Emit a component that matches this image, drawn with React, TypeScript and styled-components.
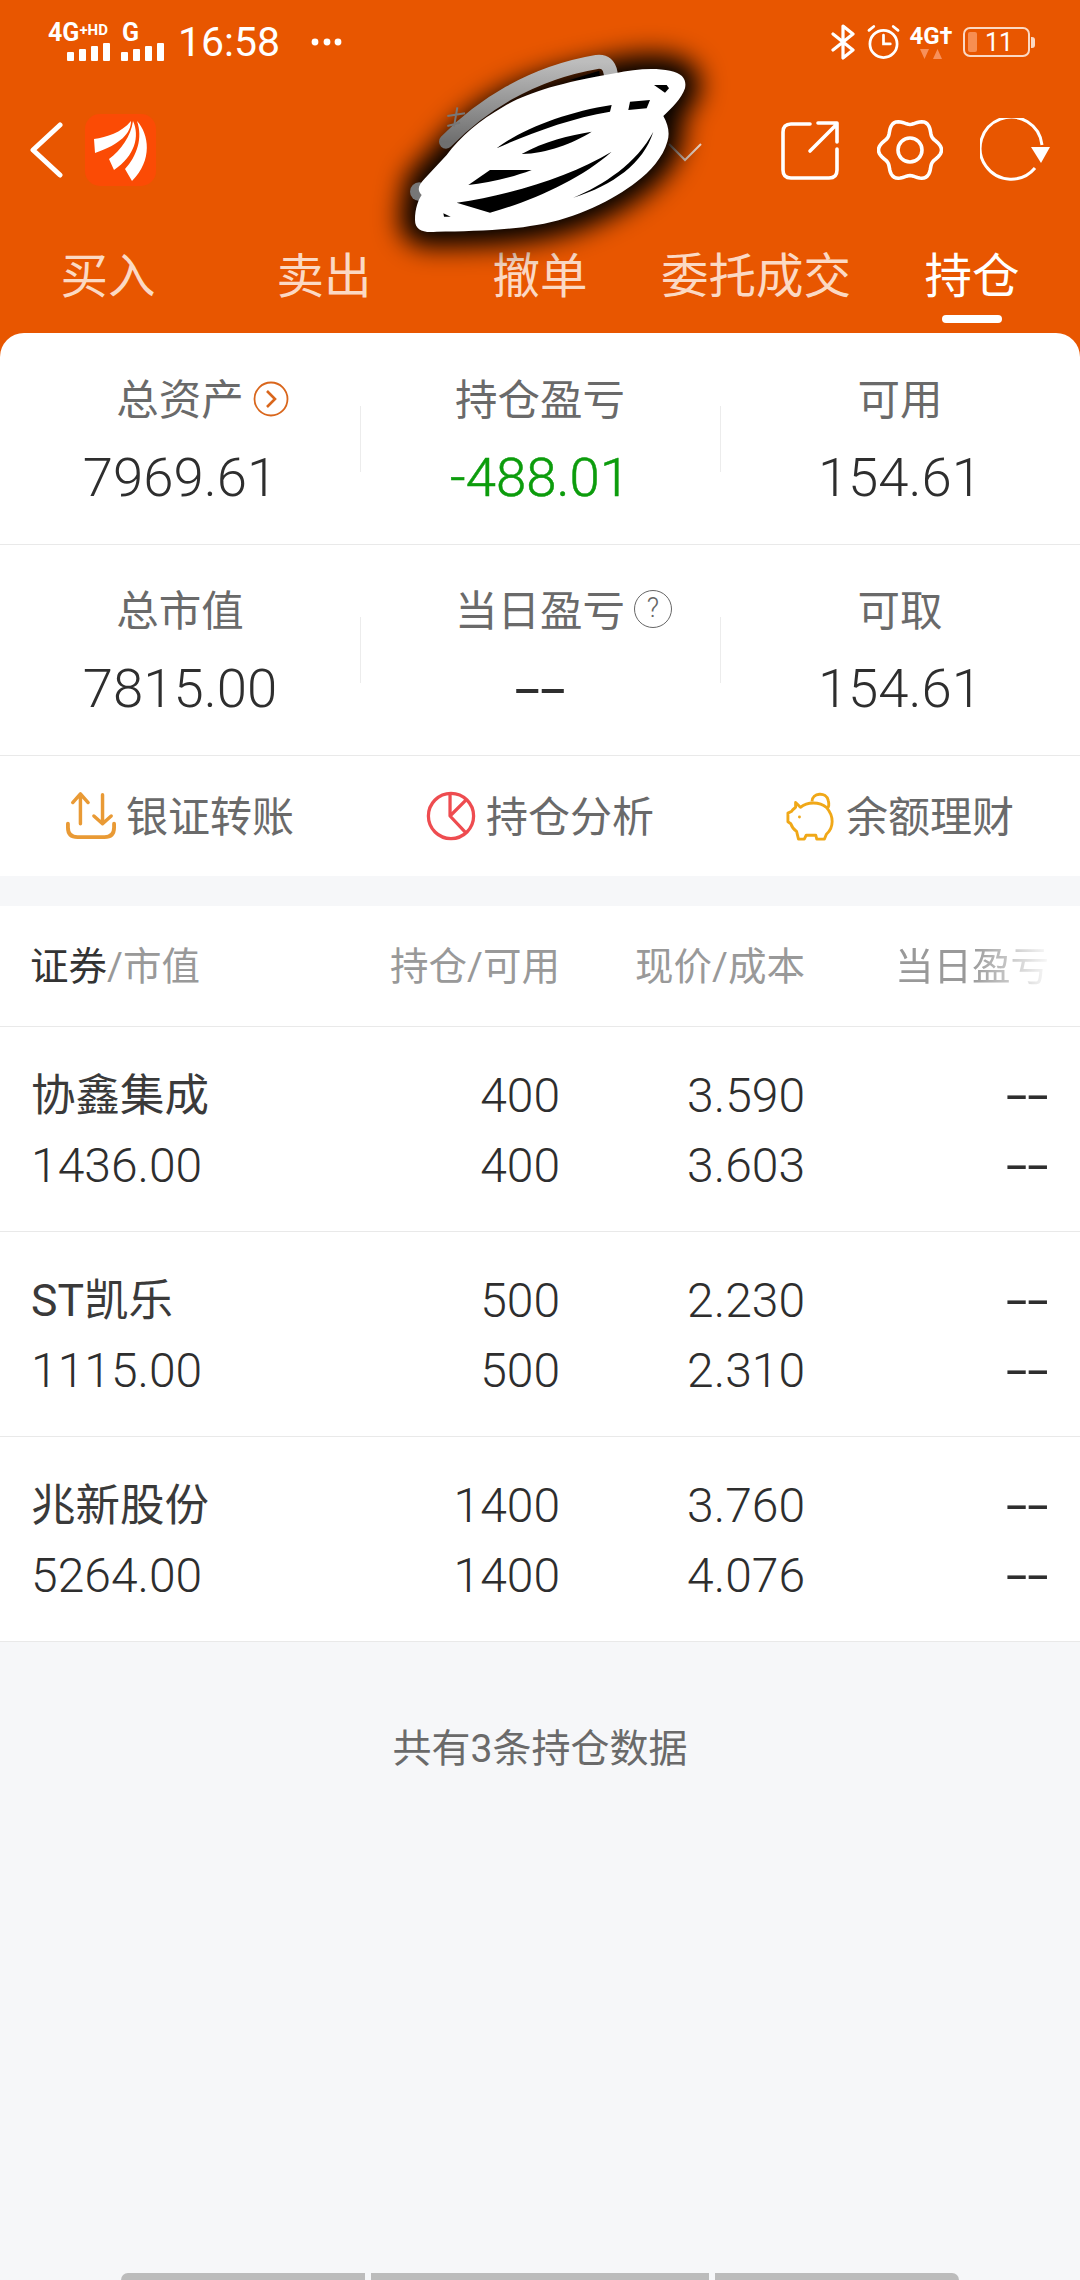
import React from "react"
import styled, { createGlobalStyle } from "styled-components"

const SANS = `Roboto, "Noto Sans CJK SC", sans-serif`

const GlobalStyle = createGlobalStyle`
	html, body {
		margin: 0;
		padding: 0;
		background: #f6f7f9;
		font-family: ${SANS};
	}
`

type Stat = { label: string; value: string; tone?: "down"; badge?: "go" | "help" }

const STATS: Stat[][] = [
	[
		{ label: "总资产", value: "7969.61", badge: "go" },
		{ label: "持仓盈亏", value: "-488.01", tone: "down" },
		{ label: "可用", value: "154.61" },
	],
	[
		{ label: "总市值", value: "7815.00" },
		{ label: "当日盈亏", value: "--", badge: "help" },
		{ label: "可取", value: "154.61" },
	],
]

const HOLDINGS = [
	{ name: "协鑫集成", worth: "1436.00", hold: "400", free: "400", price: "3.590", cost: "3.603" },
	{ name: "ST凯乐", worth: "1115.00", hold: "500", free: "500", price: "2.230", cost: "2.310" },
	{ name: "兆新股份", worth: "5264.00", hold: "1400", free: "1400", price: "3.760", cost: "4.076" },
]

const TABS = ["买入", "卖出", "撤单", "委托成交", "持仓"]

// cog outline: six soft lobes, dips at top and bottom
function gearPath() {
	const pts: string[] = []
	for (let i = 0; i < 96; i++) {
		const t = (i / 96) * Math.PI * 2
		const r = 28.5 + 3 * Math.cos(6 * t)
		pts.push(`${(33 + r * Math.cos(t)).toFixed(2)} ${(33 + r * Math.sin(t)).toFixed(2)}`)
	}
	return `M${pts.join(" L")} Z`
}

const BLOB = "M135 570 C135 535 145 510 155 495 C140 480 145 465 165 445 L230 375 C270 320 330 270 400 230 C470 190 560 160 735 130 C790 118 850 112 900 122 C940 130 950 150 945 175 C935 205 905 235 880 258 C895 285 900 310 892 335 C880 380 840 425 800 455 C730 510 620 565 500 585 C420 600 300 605 200 605 C160 610 135 600 135 570 Z"

function Scribble() {
	return (
		<ScribbleBox>
			<svg width="360" height="240" viewBox="0 0 1080 720">
				<defs>
					<filter id="soft" x="-30%" y="-40%" width="160%" height="180%">
						<feGaussianBlur stdDeviation="40" />
					</filter>
					<linearGradient id="band" x1="0" y1="0" x2="0" y2="1">
						<stop offset="0" stopColor="#bdbdbd" />
						<stop offset="1" stopColor="#6f6f6f" />
					</linearGradient>
				</defs>
				<path d={BLOB} fill="#000" stroke="#000" strokeWidth="90" filter="url(#soft)" />
				<path d="M228 335 C330 230 480 130 680 96 C705 93 718 105 722 130" fill="none" stroke="url(#band)" strokeWidth="42" strokeLinecap="round" />
				<path d="M600 150 L688 122 L690 150 Z" fill="#000" />
				<circle cx="148" cy="485" r="28" fill="#777" />
				<path d="M232 258 L285 250 M262 232 L252 290 M232 288 L270 278" fill="none" stroke="#777" strokeWidth="6" />
				<path d={BLOB} fill="#fff" />
				<path d="M380 355 C450 300 590 245 725 225 L720 245 C600 265 480 310 380 355 Z" fill="#000" />
				<path d="M455 372 C520 335 600 315 665 305 C610 340 530 370 455 372 Z" fill="#000" />
				<path d="M295 465 L360 420 L485 420 C420 445 350 458 295 465 Z" fill="#000" />
				<path d="M260 518 C420 495 600 440 725 365 C630 450 480 515 360 548 Z" fill="#000" />
				<path d="M610 503 C700 465 800 400 850 305 C820 400 730 465 610 503 Z" fill="#000" />
				<path d="M780 215 L840 210 L830 235 L775 240 Z" fill="#000" />
				<path d="M852 165 L890 165 L897 175 L885 188 Z" fill="#000" />
				<path d="M220 550 L242 560 L222 560 Z" fill="#000" />
			</svg>
		</ScribbleBox>
	)
}

function Signal() {
	return (
		<SignalBars>
			{[9, 12, 15, 18].map(h => (
				<SignalBar key={h} $h={h} />
			))}
		</SignalBars>
	)
}

function Logo() {
	return (
		<svg width="71" height="72" viewBox="0 0 71 72">
			<rect width="71" height="72" rx="15" fill="#fb4b05" />
			<path d="M9 25 C22 23 36 19 46 7 C46 19 36 30 10 39 Z" fill="#fff" />
			<path d="M24 45 C36 36 46 22 48 7 C55 22 50 42 29 56 Z" fill="#fff" />
			<path d="M40 55 C52 42 58 24 52 7 C64 20 68 46 47 67 Z" fill="#fff" />
		</svg>
	)
}

export default function App() {
	return (
		<Page>
			<GlobalStyle />
			<Header>
				<StatusBar>
					<StatusGroup>
						<NetBlock $w={62}>
							<NetLabel>4G<sup>+HD</sup></NetLabel>
							<Signal />
						</NetBlock>
						<NetBlock $w={42}>
							<NetLabel>G</NetLabel>
							<Signal />
						</NetBlock>
						<Clock>16:58</Clock>
						<svg width="31" height="8" viewBox="0 0 31 8" fill="#fff">
							<circle cx="4" cy="4" r="3.4" />
							<circle cx="16" cy="4" r="3.4" />
							<circle cx="27" cy="4" r="3.4" />
						</svg>
					</StatusGroup>
					<StatusGroup>
						<svg width="24" height="36" viewBox="0 0 24 36" fill="none" stroke="#fff" strokeWidth="3.2" strokeLinejoin="round" strokeLinecap="round">
							<path d="M2 10 L22 26 L12 34 V2 L22 10 L2 26" />
						</svg>
						<svg width="33" height="36" viewBox="0 0 34 36" fill="none" stroke="#fff" strokeWidth="2.8" strokeLinecap="round">
							<circle cx="17" cy="20" r="14" />
							<path d="M17 11 V20 H24 M2 6 L7 2 M32 6 L27 2" />
						</svg>
						<NetRight>
							<NetRightLabel>4G†</NetRightLabel>
							<svg width="22" height="10" viewBox="0 0 22 10" fill="#f7905a">
								<path d="M0 0 H9 L4.5 10 Z M13 10 H22 L17.5 0 Z" />
							</svg>
						</NetRight>
						<Battery>
							<BatteryFill />
							<BatteryText>11</BatteryText>
						</Battery>
					</StatusGroup>
				</StatusBar>
				<NavBar>
					<NavLeft>
						<svg width="36" height="56" viewBox="0 0 36 56" fill="none" stroke="#fff" strokeWidth="5" strokeLinecap="round" strokeLinejoin="round">
							<path d="M31 3 L4 28 L31 53" />
						</svg>
						<Logo />
					</NavLeft>
					<NavRight>
						<svg width="60" height="62" viewBox="0 0 60 62" fill="none" stroke="#fff" strokeWidth="3.6" strokeLinecap="round" strokeLinejoin="round">
							<path d="M30 5 H11 Q3 5 3 13 V51 Q3 59 11 59 H49 Q57 59 57 51 V30" />
							<path d="M30 32 L56 6 M38 4 H57 V23" />
						</svg>
						<svg width="66" height="66" viewBox="0 0 66 66" fill="none" stroke="#fff" strokeWidth="3.6" strokeLinejoin="round">
							<path d={gearPath()} />
							<circle cx="33" cy="33" r="12" />
						</svg>
						<svg width="70" height="64" viewBox="0 0 70 64" fill="none" stroke="#fff" strokeWidth="3">
							<path d="M55 50 A31 31 0 1 1 62 27" />
							<path d="M51 29 H70 L61 45 Z" fill="#fff" stroke="none" />
						</svg>
					</NavRight>
					<Chevron viewBox="0 0 36 20" fill="none" stroke="#f3dccd" strokeWidth="2">
						<path d="M2 2 L18 18 L34 2" />
					</Chevron>
				</NavBar>
				<Tabs>
					{TABS.map((t, i) => (
						<Tab key={t} $active={i === TABS.length - 1}>{t}</Tab>
					))}
				</Tabs>
				<Scribble />
			</Header>

			<Card>
				{STATS.map((row, r) => (
					<StatRow key={r}>
						{row.map(s => (
							<StatCell key={s.label}>
								<StatLabel>
									{s.label}
									{s.badge === "go" && (
										<BadgeIcon viewBox="0 0 36 36" fill="none" stroke="#d9661c" strokeWidth="1.8">
											<circle cx="18" cy="18" r="16.5" />
											<path d="M14 10 L22 18 L14 26" strokeWidth="2.6" />
										</BadgeIcon>
									)}
									{s.badge === "help" && <HelpBadge>?</HelpBadge>}
								</StatLabel>
								<StatValue $tone={s.tone}>
									{s.value === "--" ? <StatDash>--</StatDash> : s.value}
								</StatValue>
							</StatCell>
						))}
					</StatRow>
				))}
				<Actions>
					<Action>
						<svg width="50" height="50" viewBox="0 0 52 50" fill="none" stroke="#e99a35" strokeWidth="3.6" strokeLinecap="round" strokeLinejoin="round">
							<path d="M15 33 V2 M7 11 L15 2 L23 11" />
							<path d="M38 3 V33 M29 25 L38 33 L47 25" />
							<path d="M2 33 V37 Q2 47 12 47 H40 Q50 47 50 37 V33" strokeWidth="4" />
						</svg>
						银证转账
					</Action>
					<Action>
						<svg width="50" height="50" viewBox="0 0 52 52" fill="none" stroke="#ee4c50" strokeWidth="3.4" strokeLinejoin="round">
							<circle cx="26" cy="26" r="23.5" />
							<path d="M25 3 V26 L42 44 M25 26 L42 9" />
						</svg>
						持仓分析
					</Action>
					<Action>
						<svg width="50" height="50" viewBox="0 0 52 52" fill="none" stroke="#f0a818" strokeWidth="3" strokeLinejoin="round">
							<path d="M27 11 C27 2 42 0 44 10 C45 14 44 17 43 18" />
							<path d="M10 12 L15 17 C22 11 35 11 42 17 C50 26 50 38 42 45 L40 50 H32 L31 46 H21 L19 50 H13 L11 42 C8 40 6 37 5 34 L2 32 V23 L6 21 C7 19 9 18 10 17 Z" />
							<circle cx="14" cy="27" r="1.5" fill="#f0a818" stroke="none" />
						</svg>
						余额理财
					</Action>
				</Actions>
			</Card>

			<Table>
				<TableHead>
					<HeadName>
						<strong>证券</strong>/市值
					</HeadName>
					<NumCol $w={244}>持仓/可用</NumCol>
					<NumCol $w={245}>现价/成本</NumCol>
					<FadeCol>当日盈亏</FadeCol>
				</TableHead>
				{HOLDINGS.map(h => (
					<TableRow key={h.name}>
						<NameCol>
							<NameText>{h.name}</NameText>
							<div>{h.worth}</div>
						</NameCol>
						<NumCol $w={244}>
							<div>{h.hold}</div>
							<div>{h.free}</div>
						</NumCol>
						<NumCol $w={245}>
							<div>{h.price}</div>
							<div>{h.cost}</div>
						</NumCol>
						<NumCol $w={244}>
							<div><RowDash>--</RowDash></div>
							<div><RowDash>--</RowDash></div>
						</NumCol>
					</TableRow>
				))}
			</Table>

			<Footer>共有3条持仓数据</Footer>

			<HomeBar>
				<HomeSegment $w={244} $r="8px 0 0 0" />
				<HomeSegment $w={338} />
				<HomeSegment $w={244} $r="0 8px 0 0" />
			</HomeBar>
		</Page>
	)
}

const Page = styled("div")`
	position: relative;
	width: 1080px;
	height: 2280px;
	overflow: hidden;
	background: #f6f7f9;
	color: #333;
	display: flex;
	flex-direction: column;
`
const Header = styled("header")`
	position: relative;
	background: #e85600;
	height: 363px;
	margin-bottom: -30px;
	flex: none;
`
const StatusBar = styled("div")`
	display: flex;
	justify-content: space-between;
	align-items: center;
	height: 80px;
	padding: 4px 50px 0 48px;
	box-sizing: border-box;
`
const StatusGroup = styled("div")`
	display: flex;
	align-items: center;
	gap: 12px;
`
const NetBlock = styled("div")<{ $w: number }>`
	display: flex;
	flex-direction: column;
	align-items: flex-end;
	width: ${p => p.$w}px;
	color: #fff;
`
const NetLabel = styled("span")`
	font: 700 25px/18px ${SANS};
	align-self: flex-start;
	white-space: nowrap;
	sup {
		font-size: 15px;
		line-height: 0;
		vertical-align: 6px;
	}
`
const SignalBars = styled("div")`
	display: flex;
	align-items: flex-end;
	justify-content: flex-end;
	gap: 5px;
	height: 19px;
`
const SignalBar = styled("i")<{ $h: number }>`
	width: 7px;
	height: ${p => p.$h}px;
	background: #fff;
	border-radius: 1px;
`
const Clock = styled("span")`
	font: 400 41px/1 ${SANS};
	color: #fff;
	margin: 0 19px 0 2px;
`
const NetRight = styled("div")`
	display: flex;
	flex-direction: column;
	align-items: center;
	gap: 3px;
	width: 38px;
	margin: 0 1px 0 0;
	svg {
		display: block;
	}
`
const NetRightLabel = styled("span")`
	font: 700 24px/20px ${SANS};
	color: #fff;
	white-space: nowrap;
`
const Battery = styled("div")`
	position: relative;
	width: 67px;
	height: 30px;
	border: 2px solid #fbd9c4;
	border-radius: 7px;
	display: flex;
	align-items: center;
	box-sizing: border-box;
	padding: 3px;
	&::after {
		content: "";
		position: absolute;
		right: -7px;
		top: 8px;
		width: 4px;
		height: 11px;
		background: #fbd9c4;
		border-radius: 0 3px 3px 0;
	}
`
const BatteryFill = styled("div")`
	width: 9px;
	height: 100%;
	background: #f78e52;
	border-radius: 2px;
`
const BatteryText = styled("span")`
	font: 400 25px/1 ${SANS};
	color: #fff;
	margin-left: 8px;
`
const NavBar = styled("div")`
	position: relative;
	display: flex;
	justify-content: space-between;
	align-items: center;
	height: 100px;
	margin-top: 20px;
	padding: 0 30px 0 29px;
`
const NavLeft = styled("div")`
	display: flex;
	align-items: center;
	gap: 20px;
`
const NavRight = styled("div")`
	display: flex;
	align-items: center;
	gap: 37px;
`
const Chevron = styled("svg")`
	position: absolute;
	left: 667px;
	top: 42px;
	width: 36px;
	height: 20px;
`
const Tabs = styled("nav")`
	display: grid;
	grid-template-columns: repeat(5, 1fr);
	margin-top: 41px;
`
const Tab = styled("div")<{ $active?: boolean }>`
	position: relative;
	text-align: center;
	white-space: nowrap;
	font: 400 47.5px/72px ${SANS};
	color: ${p => (p.$active ? "#fff" : "#fbd9c4")};
	&::after {
		content: "";
		display: ${p => (p.$active ? "block" : "none")};
		position: absolute;
		left: 78px;
		top: 74px;
		width: 60px;
		height: 8px;
		border-radius: 4px;
		background: #fff;
	}
`
const ScribbleBox = styled("div")`
	position: absolute;
	left: 370px;
	top: 30px;
	width: 360px;
	height: 240px;
	svg {
		display: block;
		overflow: visible;
	}
`
const Card = styled("section")`
	position: relative;
	background: #fff;
	border-radius: 24px 24px 0 0;
	padding-top: 1px;
	flex: none;
`
const StatRow = styled("div")`
	display: grid;
	grid-template-columns: repeat(3, 1fr);
	height: 211px;
	border-bottom: 1px solid #e9e9e9;
	box-sizing: border-box;
`
const StatCell = styled("div")`
	position: relative;
	display: flex;
	flex-direction: column;
	align-items: center;
	padding-top: 38px;
	& + &::before {
		content: "";
		position: absolute;
		left: 0;
		top: 72px;
		height: 66px;
		width: 1px;
		background: #ececec;
	}
`
const StatLabel = styled("div")`
	display: flex;
	align-items: center;
	gap: 9px;
	font: 400 42.5px/58px ${SANS};
	color: #6a6a6a;
	height: 58px;
`
const BadgeIcon = styled("svg")`
	width: 36px;
	height: 36px;
	margin: -4px -45px 0 0;
`
const HelpBadge = styled("span")`
	display: block;
	width: 38px;
	height: 38px;
	margin: -6px -47px 0 0;
	border: 1.5px solid #666;
	border-radius: 50%;
	box-sizing: border-box;
	text-align: center;
	font: 300 27px/35px ${SANS};
	color: #666;
`
const StatValue = styled("div")<{ $tone?: "down" }>`
	margin-top: 17px;
	font: 300 54.5px/60px ${SANS};
	color: ${p => (p.$tone === "down" ? "#0c9c0c" : "#2e2e2e")};
	-webkit-text-stroke: ${p => (p.$tone === "down" ? "0.5px #0c9c0c" : "0")};
`
const StatDash = styled("span")`
	display: inline-block;
	font-weight: 400;
	transform: scaleX(1.7);
`
const Actions = styled("div")`
	display: grid;
	grid-template-columns: repeat(3, 1fr);
	height: 120px;
	align-items: center;
`
const Action = styled("div")`
	display: flex;
	align-items: center;
	justify-content: center;
	gap: 10px;
	padding-top: 3px;
	font: 400 42px/1 ${SANS};
	color: #6a6a6a;
	svg {
		margin-top: -4px;
	}
`
const Table = styled("section")`
	margin-top: 30px;
	background: #fff;
	flex: none;
`
const TableHead = styled("div")`
	display: flex;
	align-items: center;
	height: 121px;
	padding: 2px 31px 0 30px;
	box-sizing: border-box;
	font: 400 38.5px/1 ${SANS};
	color: #999;
	border-bottom: 1px solid #e9e9e9;
	strong {
		font-weight: 400;
		color: #333;
	}
`
const TableRow = styled("div")`
	display: flex;
	align-items: center;
	height: 205px;
	padding: 3px 31px 0;
	font: 300 48px/70px ${SANS};
	color: #2e2e2e;
	border-bottom: 1px solid #e9e9e9;
	box-sizing: border-box;
`
const NameCol = styled("div")`
	width: 285px;
	flex: none;
`
const HeadName = styled(NameCol)`
	width: 286px;
`
const NameText = styled("div")`
	font-size: 44.5px;
	font-weight: 400;
	color: #3a3a3a;
`
const NumCol = styled("div")<{ $w: number }>`
	width: ${p => p.$w}px;
	flex: none;
	text-align: right;
`
const RowDash = styled("span")`
	display: inline-block;
	font-weight: 400;
	transform: scaleX(1.6);
	transform-origin: right center;
`
const FadeCol = styled("div")`
	width: 244px;
	flex: none;
	text-align: right;
	white-space: nowrap;
	-webkit-mask-image: linear-gradient(to right, #000 68%, rgba(0, 0, 0, 0.06));
	mask-image: linear-gradient(to right, #000 68%, rgba(0, 0, 0, 0.06));
`
const Footer = styled("div")`
	margin-top: 80px;
	text-align: center;
	font: 400 39px/54px ${SANS};
	color: #6a6a6a;
`
const HomeBar = styled("div")`
	position: absolute;
	left: 121px;
	bottom: 0;
	display: flex;
	gap: 6px;
`
const HomeSegment = styled("div")<{ $w: number; $r?: string }>`
	width: ${p => p.$w}px;
	height: 7px;
	background: #bcbcbc;
	border-radius: ${p => p.$r ?? "0"};
`
